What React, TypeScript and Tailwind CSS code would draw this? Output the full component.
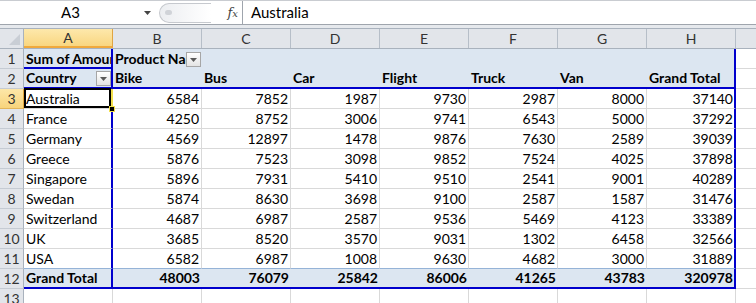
import React from "react";

const BLUE = "#0000cd";

type Row = { label: string; vals: number[] };

const data: Row[] = [
  { label: "Australia", vals: [6584, 7852, 1987, 9730, 2987, 8000, 37140] },
  { label: "France", vals: [4250, 8752, 3006, 9741, 6543, 5000, 37292] },
  { label: "Germany", vals: [4569, 12897, 1478, 9876, 7630, 2589, 39039] },
  { label: "Greece", vals: [5876, 7523, 3098, 9852, 7524, 4025, 37898] },
  { label: "Singapore", vals: [5896, 7931, 5410, 9510, 2541, 9001, 40289] },
  { label: "Swedan", vals: [5874, 8630, 3698, 9100, 2587, 1587, 31476] },
  { label: "Switzerland", vals: [4687, 6987, 2587, 9536, 5469, 4123, 33389] },
  { label: "UK", vals: [3685, 8520, 3570, 9031, 1302, 6458, 32566] },
  { label: "USA", vals: [6582, 6987, 1008, 9630, 4682, 3000, 31889] },
];
const totals = [48003, 76079, 25842, 86006, 41265, 43783, 320978];
const products = ["Bike", "Bus", "Car", "Flight", "Truck", "Van", "Grand Total"];

function DropBtn() {
  return (
    <div className="w-[15px] h-[15px] shrink-0 border border-[#a6a6a6] bg-gradient-to-b from-[#ffffff] to-[#e4e4e4] flex items-center justify-center">
      <svg width="7" height="4" viewBox="0 0 7 4">
        <path d="M0 0 L7 0 L3.5 4 Z" fill="#5a5a5a" />
      </svg>
    </div>
  );
}

function RowHead({ n, sel }: { n: number; sel?: boolean }) {
  return (
    <div
      className={
        sel
          ? "w-[24px] shrink-0 border-r border-b border-r-[#e3a63c] border-b-[#e3b55a] bg-gradient-to-b from-[#fde7a8] to-[#f8d47c] text-[#333] text-center text-[14px] leading-[19px]"
          : "w-[24px] shrink-0 border-r border-b border-r-[#a9b2bd] border-b-[#c5cbd3] bg-[#e2e5ea] text-[#333] text-center text-[14px] leading-[19px]"
      }
    >
      {n}
    </div>
  );
}

export default function App() {
  return (
    <div className="w-[756px] h-[303px] overflow-hidden bg-white font-['Lato',sans-serif] text-[14px] text-black">
      {/* Formula bar */}
      <div className="h-[25px] flex items-stretch border-t border-t-[#c9ccd1] border-b border-b-[#9fa5ad] bg-white">
        <div className="w-[140px] shrink-0 flex items-center justify-center text-[15px] pl-[1px]">A3</div>
        <div className="w-[15px] shrink-0 flex items-center justify-center">
          <svg width="7" height="4" viewBox="0 0 7 4">
            <path d="M0 0 L7 0 L3.5 4 Z" fill="#444" />
          </svg>
        </div>
        <div className="w-[87px] shrink-0 flex items-center pl-[4px] relative">
          <div className="h-[20px] w-[52px] rounded-l-full border-l border-t border-b border-[#c6c9ce] bg-gradient-to-r from-[#eceef1] to-[#ffffff] flex items-center pl-[5px]">
            <div className="w-[7px] h-[5px] rounded-full bg-[#d0d3d8]" />
          </div>
          <div className="ml-auto mr-[4px] font-['DejaVu_Serif',serif] italic text-[13px] text-[#444] leading-none">
            f<span className="text-[10px]">x</span>
          </div>
        </div>
        <div className="flex-1 border-l border-[#9fa5ad] flex items-center pl-[8px] text-[15px]">Australia</div>
      </div>
      <div className="h-[3px] bg-[#e6e9ed]" />

      {/* Column headers */}
      <div className="h-[21px] flex border-t border-b border-[#a9b2bd] bg-[#e2e5ea]">
        <div className="w-[24px] shrink-0 border-r border-[#a9b2bd] relative bg-[#e2e5ea] flex items-end justify-end pr-[3px] pb-[3px]">
          <svg width="11" height="11" viewBox="0 0 11 11">
            <path d="M11 0 L11 11 L0 11 Z" fill="#c9ced5" />
          </svg>
        </div>
        {["A", "B", "C", "D", "E", "F", "G", "H"].map((c, i) => (
          <div
            key={c}
            className={
              i === 0
                ? "w-[89px] shrink-0 border-r border-r-[#e0a542] border-b-2 border-b-[#f0a93c] bg-gradient-to-b from-[#fde8ab] to-[#f9d680] text-center text-[#333] text-[14px] leading-[18px]"
                : "w-[89px] shrink-0 border-r border-[#b6bec8] text-center text-[#333] text-[14px] leading-[19px]"
            }
          >
            {c}
          </div>
        ))}
        <div className="flex-1" />
      </div>

      {/* Row 1 */}
      <div className="h-[20px] flex">
        <RowHead n={1} />
        <div className="w-[89px] shrink-0 border-r-2 border-b-2 border-[#0000cd] bg-[#dce6f1] font-bold pl-[2px] leading-[19px] overflow-hidden whitespace-nowrap">
          Sum of Amount
        </div>
        <div className="w-[89px] shrink-0 bg-[#dce6f1] font-bold pl-[2px] leading-[19px] flex items-start">
          <span className="flex-1 overflow-hidden whitespace-nowrap">Product Name</span>
          <div className="mt-[3px] mr-[1px]">
            <DropBtn />
          </div>
        </div>
        <div className="w-[89px] shrink-0 bg-[#dce6f1]" />
        <div className="w-[89px] shrink-0 bg-[#dce6f1]" />
        <div className="w-[89px] shrink-0 bg-[#dce6f1]" />
        <div className="w-[89px] shrink-0 bg-[#dce6f1]" />
        <div className="w-[89px] shrink-0 bg-[#dce6f1]" />
        <div className="w-[89px] shrink-0 bg-[#dce6f1] border-r-2 border-[#0000cd]" />
        <div className="flex-1 border-b border-[#d9d9d9]" />
      </div>

      {/* Row 2 */}
      <div className="h-[20px] flex">
        <RowHead n={2} />
        <div className="w-[89px] shrink-0 border-r-2 border-b-2 border-[#0000cd] bg-[#dce6f1] font-bold pl-[2px] leading-[18px] flex items-start">
          <span className="flex-1 overflow-hidden whitespace-nowrap">Country</span>
          <div className="mt-[2px] mr-[0px]">
            <DropBtn />
          </div>
        </div>
        {products.map((p, i) => (
          <div
            key={p}
            className={
              i === 6
                ? "w-[89px] shrink-0 border-r-2 border-b-2 border-[#0000cd] bg-[#dce6f1] font-bold pl-[2px] leading-[18px] whitespace-nowrap overflow-hidden"
                : "w-[89px] shrink-0 border-b-2 border-[#0000cd] bg-[#dce6f1] font-bold pl-[2px] leading-[18px] whitespace-nowrap overflow-hidden"
            }
          >
            {p}
          </div>
        ))}
        <div className="flex-1 border-b border-[#d9d9d9]" />
      </div>

      {/* Data rows */}
      {data.map((r, ri) => {
        const last = ri === data.length - 1;
        return (
          <div key={r.label} className="h-[20px] flex">
            <RowHead n={ri + 3} sel={ri === 0} />
            <div
              className={
                ri === 0
                  ? "w-[89px] shrink-0 relative border-r-2 border-r-[#f2df4c] border-b border-b-[#d9d9d9] pl-[2px] leading-[19px] whitespace-nowrap"
                  : last
                  ? "w-[89px] shrink-0 border-r-2 border-r-[#0000cd] border-b border-b-[#95b3d7] pl-[2px] leading-[19px] whitespace-nowrap"
                  : "w-[89px] shrink-0 border-r-2 border-r-[#0000cd] border-b border-b-[#d9d9d9] pl-[2px] leading-[19px] whitespace-nowrap"
              }
            >
              {r.label}
              {ri === 0 && (
                <>
                  <div className="absolute left-0 right-0 -top-[1px] bottom-0 border-2 border-black pointer-events-none" />
                  <div className="absolute -right-[4px] -bottom-[4px] w-[6px] h-[6px] bg-black border border-[#f2df4c] z-10" />
                </>
              )}
            </div>
            {r.vals.map((v, ci) => (
              <div
                key={ci}
                className={
                  ci === 6
                    ? last
                      ? "w-[89px] shrink-0 border-r-2 border-r-[#0000cd] border-b border-b-[#95b3d7] text-right pr-[1px] leading-[19px]"
                      : "w-[89px] shrink-0 border-r-2 border-r-[#0000cd] border-b border-b-[#d9d9d9] text-right pr-[1px] leading-[19px]"
                    : last
                    ? "w-[89px] shrink-0 border-r border-r-[#d9d9d9] border-b border-b-[#95b3d7] text-right pr-[2px] leading-[19px]"
                    : "w-[89px] shrink-0 border-r border-r-[#d9d9d9] border-b border-b-[#d9d9d9] text-right pr-[2px] leading-[19px]"
                }
              >
                {v}
              </div>
            ))}
            <div className="flex-1 border-b border-[#d9d9d9]" />
          </div>
        );
      })}

      {/* Row 12 Grand Total */}
      <div className="h-[20px] flex">
        <RowHead n={12} />
        <div className="w-[89px] shrink-0 border-r-2 border-b-2 border-[#0000cd] bg-[#dce6f1] font-bold pl-[2px] leading-[18px] whitespace-nowrap">
          Grand Total
        </div>
        {totals.map((v, ci) => (
          <div
            key={ci}
            className={
              ci === 6
                ? "w-[89px] shrink-0 border-r-2 border-b-2 border-[#0000cd] bg-[#dce6f1] font-bold text-right pr-[1px] leading-[18px]"
                : "w-[89px] shrink-0 border-b-2 border-[#0000cd] bg-[#dce6f1] font-bold text-right pr-[2px] leading-[18px]"
            }
          >
            {v}
          </div>
        ))}
        <div className="flex-1 border-b border-[#d9d9d9]" />
      </div>

      {/* Row 13 */}
      <div className="h-[20px] flex">
        <RowHead n={13} />
        {[0, 1, 2, 3, 4, 5, 6, 7].map((i) => (
          <div key={i} className="w-[89px] shrink-0 border-r border-b border-[#d9d9d9]" />
        ))}
        <div className="flex-1 border-b border-[#d9d9d9]" />
      </div>
    </div>
  );
}
